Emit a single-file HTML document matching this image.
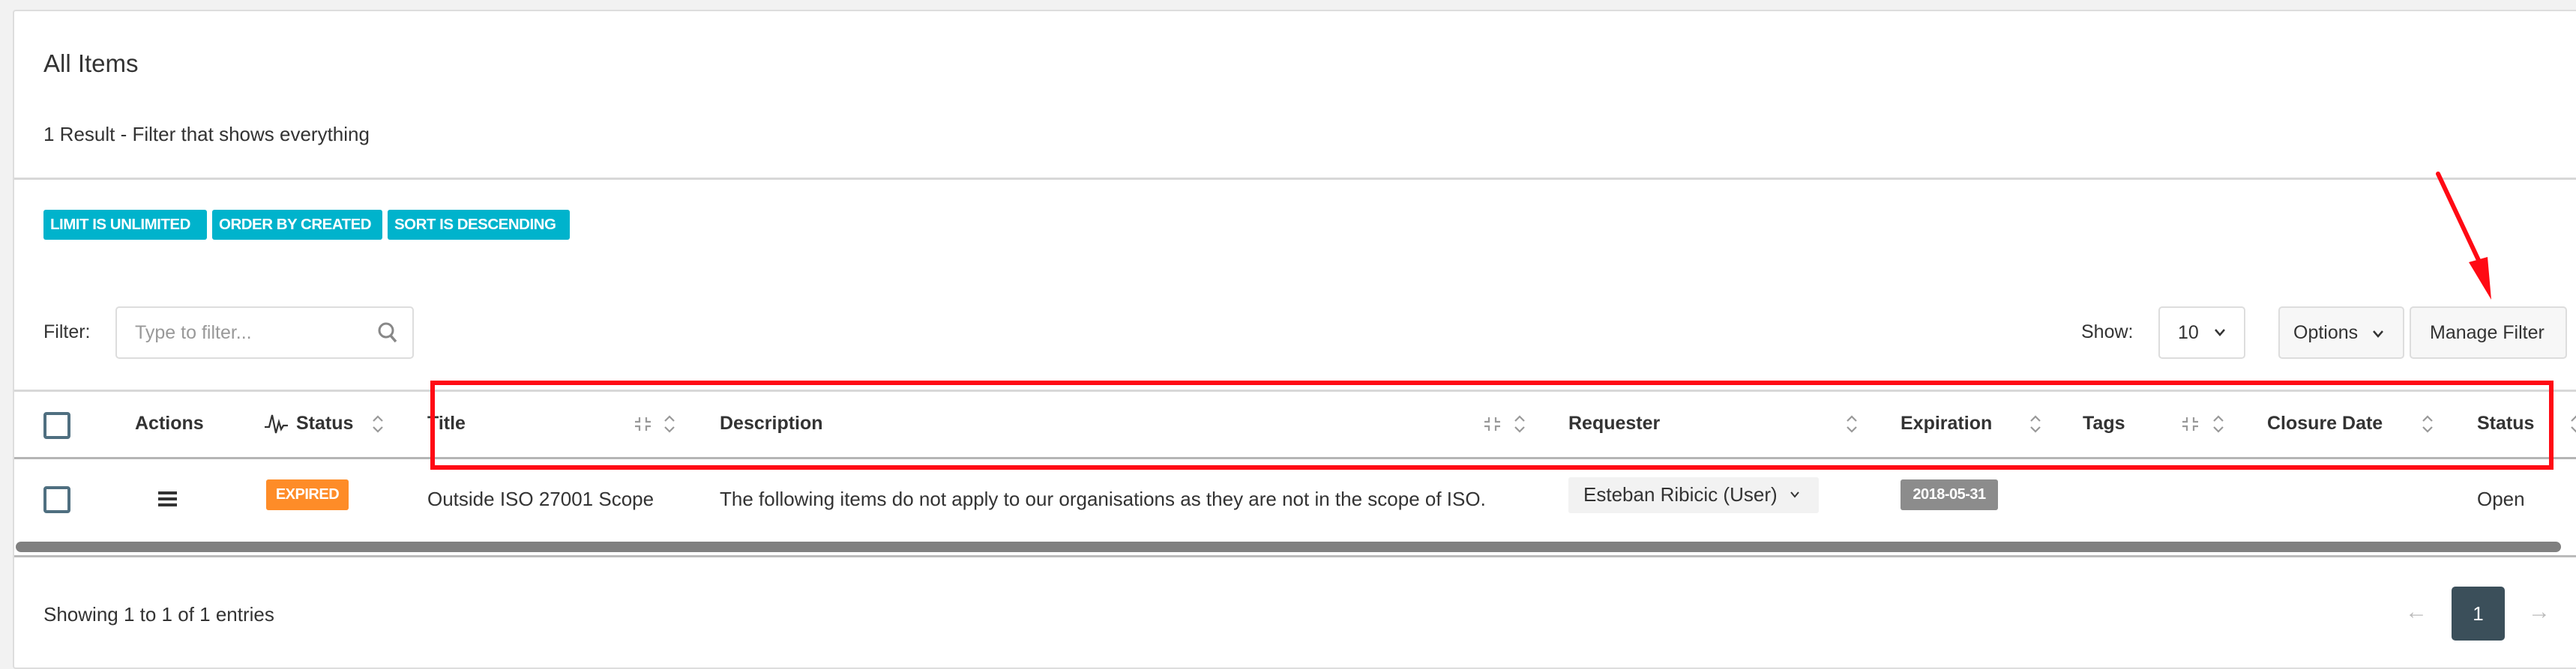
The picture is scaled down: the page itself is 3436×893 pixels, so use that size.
<!DOCTYPE html>
<html><head><meta charset="utf-8"><style>
*{margin:0;padding:0;box-sizing:border-box}
body{width:3436px;height:880px;background:#f2f2f2;font-family:"Liberation Sans",Arial,sans-serif;color:#333;position:relative;overflow:hidden}
.a{position:absolute;white-space:nowrap}
.card{position:absolute;left:17px;top:13px;width:3440px;height:880px;background:#fff;border:2px solid #ddd;border-radius:4px}
.hl{position:absolute;left:19px;width:3420px;height:3px;background:#d8d8d8}
.badge{position:absolute;top:280px;height:40px;background:#00b3cc;color:#fff;font-weight:bold;font-size:20.5px;line-height:40px;padding:0 9px;border-radius:3px;letter-spacing:-0.5px}
.btn{position:absolute;top:409px;height:70px;border:2px solid #ddd;border-radius:5px;font-size:25px;line-height:66px}
.th{position:absolute;top:551px;font-size:25px;font-weight:bold;color:#333;white-space:nowrap}
.td{position:absolute;top:651px;font-size:26px;color:#333;white-space:nowrap}
.cb{position:absolute;left:58px;width:36px;height:36px;border:4px solid #4f6f80;border-radius:4px}
svg{position:absolute}
</style></head><body>
<div class="card"></div>
<div class="a" style="left:58px;top:66px;font-size:33px">All Items</div>
<div class="a" style="left:58px;top:164px;font-size:26px">1 Result - Filter that shows everything</div>
<div class="hl" style="top:237px"></div>
<div class="badge" style="left:58px;width:218px">LIMIT IS UNLIMITED</div>
<div class="badge" style="left:283px;width:227px">ORDER BY CREATED</div>
<div class="badge" style="left:517px;width:243px">SORT IS DESCENDING</div>
<div class="a" style="left:58px;top:429px;font-size:25px">Filter:</div>
<div class="btn" style="left:154px;width:398px;color:#999;padding-left:24px">Type to filter...</div>
<svg style="left:502px;top:428px" width="30" height="32" viewBox="0 0 30 32"><circle cx="13" cy="13" r="9" fill="none" stroke="#888" stroke-width="3"/><line x1="19" y1="20" x2="26" y2="28" stroke="#888" stroke-width="3.5"/></svg>
<div class="a" style="left:2776px;top:429px;font-size:25px">Show:</div>
<div class="btn" style="left:2879px;width:116px;padding-left:24px">10</div>
<svg style="left:2953px;top:438px" width="16" height="12"><polyline points="2,2 8,9 14,2" fill="none" stroke="#333" stroke-width="2.5"/></svg>
<div class="btn" style="left:3039px;width:168px;background:#f7f7f7;padding-left:18px">Options</div>
<svg style="left:3164px;top:440px" width="16" height="12"><polyline points="2,2 8,9 14,2" fill="none" stroke="#333" stroke-width="2.5"/></svg>
<div class="btn" style="left:3214px;width:210px;background:#f7f7f7;padding-left:25px">Manage Filter</div>

<div class="hl" style="top:520px"></div>
<div class="hl" style="top:610px;background:#b5b5b5"></div>
<div class="cb" style="top:550px"></div>
<div class="th" style="left:180px">Actions</div>
<svg style="left:353px;top:551px" width="34" height="30" viewBox="0 0 34 30"><polyline points="0,19 6,19 10,3 15,27 19,12 22,22 25,17 31,17" fill="none" stroke="#333" stroke-width="2.2"/></svg>
<div class="th" style="left:395px">Status</div>
<div class="th" style="left:570px">Title</div>
<div class="th" style="left:960px">Description</div>
<div class="th" style="left:2092px">Requester</div>
<div class="th" style="left:2535px">Expiration</div>
<div class="th" style="left:2778px">Tags</div>
<div class="th" style="left:3024px">Closure Date</div>
<div class="th" style="left:3304px">Status</div>
<svg width="0" height="0"><defs>
<g id="s"><polyline points="1,8 7,2 13,8" fill="none" stroke="#999" stroke-width="2.2"/><polyline points="1,16 7,22 13,16" fill="none" stroke="#999" stroke-width="2.2"/></g>
<g id="c"><path d="M6,0V6H0M15,0V6H21M6,18V12H0M15,18V12H21" fill="none" stroke="#999" stroke-width="2.2"/></g>
</defs></svg>
<svg style="left:497px;top:554px" width="16" height="26"><use href="#s"/></svg>
<svg style="left:847px;top:557px" width="22" height="20"><use href="#c"/></svg>
<svg style="left:886px;top:554px" width="16" height="26"><use href="#s"/></svg>
<svg style="left:1980px;top:557px" width="22" height="20"><use href="#c"/></svg>
<svg style="left:2020px;top:554px" width="16" height="26"><use href="#s"/></svg>
<svg style="left:2463px;top:554px" width="16" height="26"><use href="#s"/></svg>
<svg style="left:2708px;top:554px" width="16" height="26"><use href="#s"/></svg>
<svg style="left:2911px;top:557px" width="22" height="20"><use href="#c"/></svg>
<svg style="left:2952px;top:554px" width="16" height="26"><use href="#s"/></svg>
<svg style="left:3231px;top:554px" width="16" height="26"><use href="#s"/></svg>
<svg style="left:3429px;top:554px" width="16" height="26"><use href="#s"/></svg>

<div class="cb" style="top:649px"></div>
<div class="a" style="left:211px;top:656px;width:25px;height:4px;background:#333;box-shadow:0 8px 0 #333,0 16px 0 #333"></div>
<div class="a" style="left:355px;top:640px;width:110px;height:41px;background:#fe8c28;color:#fff;font-weight:bold;font-size:20px;line-height:41px;text-align:center;border-radius:3px;letter-spacing:-0.5px">EXPIRED</div>
<div class="td" style="left:570px">Outside ISO 27001 Scope</div>
<div class="td" style="left:960px">The following items do not apply to our organisations as they are not in the scope of ISO.</div>
<div class="a" style="left:2092px;top:637px;width:334px;height:48px;background:#f2f2f2;border-radius:3px;font-size:26px;line-height:46px;padding-left:20px">Esteban Ribicic (User)</div>
<svg style="left:2387px;top:655px" width="14" height="10"><polyline points="2,2 7,8 12,2" fill="none" stroke="#333" stroke-width="2"/></svg>
<div class="a" style="left:2535px;top:640px;width:130px;height:41px;background:#8c8c8c;color:#fff;font-weight:bold;font-size:20px;line-height:41px;text-align:center;border-radius:3px;letter-spacing:-0.5px">2018-05-31</div>
<div class="td" style="left:3304px">Open</div>

<div class="a" style="left:21px;top:723px;width:3395px;height:14px;background:#808080;border-radius:7px"></div>
<div class="hl" style="top:741px;background:#bbb"></div>
<div class="a" style="left:58px;top:805px;font-size:26px">Showing 1 to 1 of 1 entries</div>
<div class="a" style="left:3208px;top:800px;font-size:30px;color:#bbb">←</div>
<div class="a" style="left:3270px;top:783px;width:71px;height:72px;background:#3b4f5a;border-radius:5px;color:#fff;font-size:26px;line-height:72px;text-align:center">1</div>
<div class="a" style="left:3372px;top:800px;font-size:30px;color:#bbb">→</div>

<div class="a" style="left:574px;top:508px;width:2832px;height:119px;border:6px solid #ff0a14"></div>
<svg style="left:0;top:0" width="3436" height="880"><line x1="3252" y1="232" x2="3312" y2="360" stroke="#ff0a14" stroke-width="6" stroke-linecap="round"/><polygon points="3293,350 3318,343 3323,400" fill="#ff0a14"/></svg>
</body></html>
